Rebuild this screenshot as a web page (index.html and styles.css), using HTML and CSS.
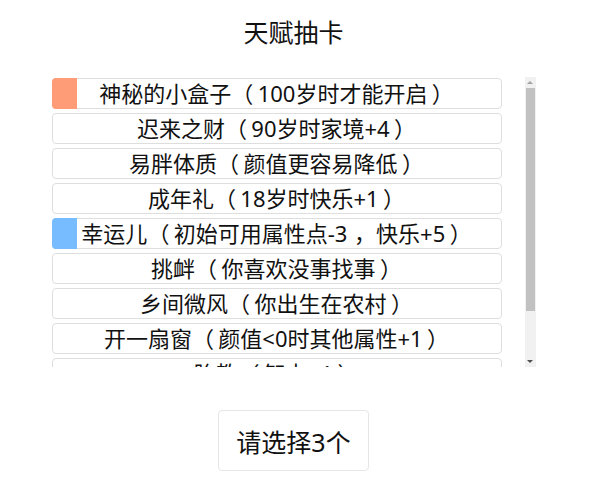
FILE: index.html
```html
<!DOCTYPE html>
<html lang="zh-CN">
<head>
<meta charset="utf-8">
<title>天赋抽卡</title>
<link rel="stylesheet" href="styles.css">
</head>
<body>
<div class="app">
  <h1 class="title">天赋抽卡</h1>
  <div class="panel">
    <ul class="list">
      <li class="item"><span class="mark mark-orange"></span><span class="label">神秘的小盒子<span class="po">（</span>100岁时才能开启<span class="pc">）</span></span></li>
      <li class="item"><span class="label">迟来之财<span class="po">（</span>90岁时家境+4<span class="pc">）</span></span></li>
      <li class="item"><span class="label">易胖体质<span class="po">（</span>颜值更容易降低<span class="pc">）</span></span></li>
      <li class="item"><span class="label">成年礼<span class="po">（</span>18岁时快乐+1<span class="pc">）</span></span></li>
      <li class="item"><span class="mark mark-blue"></span><span class="label">幸运儿<span class="po">（</span>初始可用属性点-3<span class="cm">，</span>快乐+5<span class="pc">）</span></span></li>
      <li class="item"><span class="label">挑衅<span class="po">（</span>你喜欢没事找事<span class="pc">）</span></span></li>
      <li class="item"><span class="label">乡间微风<span class="po">（</span>你出生在农村<span class="pc">）</span></span></li>
      <li class="item"><span class="label">开一扇窗<span class="po">（</span>颜值&lt;0时其他属性+1<span class="pc">）</span></span></li>
      <li class="item"><span class="label">胎教<span class="po">（</span>智力+1<span class="pc">）</span></span></li>
    </ul>
    <div class="scrollbar">
      <div class="sb-btn"><span class="arrow-up"></span></div>
      <div class="sb-thumb"></div>
      <div class="sb-rest"></div>
      <div class="sb-btn"><span class="arrow-down"></span></div>
    </div>
  </div>
  <button class="choose">请选择3个</button>
</div>
</body>
</html>
```
FILE: styles.css
```css
* { box-sizing: border-box; }
html, body { margin: 0; padding: 0; background: #fff; }
body {
  font-family: "Noto Sans", "Noto Sans CJK SC", sans-serif;
  color: #111;
}
.app {
  width: 587px;
  display: flex;
  flex-direction: column;
  align-items: center;
}
.title {
  margin: 0;
  padding-top: 14px;
  font-size: 25px;
  line-height: 36px;
  font-weight: normal;
}
.panel {
  margin-top: 27px;
  width: 484px;
  height: 290px;
  display: flex;
  gap: 23px;
}
.list {
  list-style: none;
  margin: 0;
  padding: 1px 0 0 0;
  width: 450px;
  height: 290px;
  overflow: hidden;
  display: flex;
  flex-direction: column;
  gap: 4px;
}
.item {
  position: relative;
  flex: 0 0 31px;
  height: 31px;
  border: 1px solid #dedede;
  border-radius: 4px;
  background: #fff;
  display: flex;
  align-items: center;
  justify-content: center;
  padding: 0;
  font-size: 22px;
  line-height: 29px;
  white-space: nowrap;
}
.po { padding-right: 0.2em; }
.pc { padding-left: 0.2em; }
.cm { padding-left: 0.3em; }
.mark {
  position: absolute;
  left: -1px;
  top: -1px;
  bottom: -1px;
  width: 25px;
  border-radius: 4px 0 0 4px;
}
.mark-orange { background: #ff9c78; }
.mark-blue { background: #76bcff; }
.scrollbar {
  width: 11px;
  height: 290px;
  background: #f1f1f1;
  display: flex;
  flex-direction: column;
}
.sb-btn {
  flex: 0 0 11px;
  display: flex;
  align-items: center;
  justify-content: center;
}
.arrow-up {
  width: 0; height: 0;
  border-left: 3px solid transparent;
  border-right: 3px solid transparent;
  border-bottom: 3px solid #a3a3a3;
}
.arrow-down {
  width: 0; height: 0;
  border-left: 3px solid transparent;
  border-right: 3px solid transparent;
  border-top: 3px solid #505050;
}
.sb-thumb {
  flex: 0 0 223px;
  margin: 0 1px;
  background: #c1c1c1;
}
.sb-rest { flex: 1; }
.choose {
  margin-top: 43px;
  width: 151px;
  height: 61px;
  border: 1px solid #e6e6e6;
  border-radius: 4px;
  background: #fff;
  font-family: "Noto Sans", "Noto Sans CJK SC", sans-serif;
  font-size: 25px;
  color: #111;
  padding: 0;
}
```
